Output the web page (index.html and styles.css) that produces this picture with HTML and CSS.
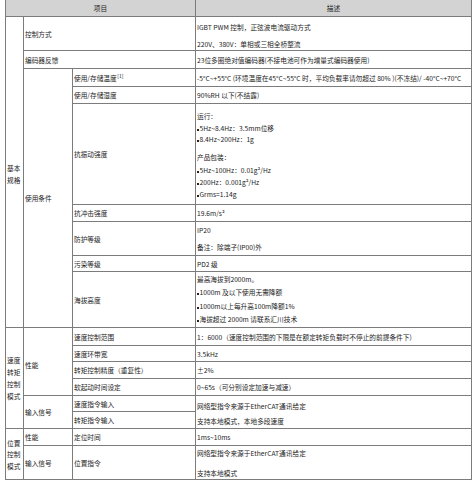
FILE: index.html
```html
<!DOCTYPE html>
<html lang="zh-CN">
<head>
<meta charset="utf-8">
<title>规格</title>
<link rel="stylesheet" href="styles.css">
</head>
<body>
<div class="spec">
  <div class="cell head c3">项目</div>
  <div class="cell head">描述</div>

  <div class="cell cat r9 cat-basic">基本<br>规格</div>
  <div class="cell c2">控制方式</div>
  <div class="cell lh17 shift">
    <div>IGBT PWM 控制，正弦波电流驱动方式</div>
    <div>220V、380V：单相或三相全桥整流</div>
  </div>

  <div class="cell c2">编码器反馈</div>
  <div class="cell">23位多圈绝对值编码器(不接电池可作为增量式编码器使用)</div>

  <div class="cell r7">使用条件</div>
  <div class="cell"><span>使用/存储温度<sup class="note">[1]</sup></span></div>
  <div class="cell">-5°C~+55°C (环境温度在45°C~55°C 时，平均负载率请勿超过 80% )(不冻结)/ -40°C~+70°C</div>

  <div class="cell">使用/存储湿度</div>
  <div class="cell">90%RH 以下(不结露)</div>

  <div class="cell">抗振动强度</div>
  <div class="cell vib">
    <div class="para">运行：</div>
    <div class="bul">5Hz~8.4Hz：3.5mm位移</div>
    <div class="bul">8.4Hz~200Hz：1g</div>
    <div class="para gap">产品包装：</div>
    <div class="bul tall">5Hz~100Hz：0.01g²/Hz</div>
    <div class="bul tall">200Hz：0.001g²/Hz</div>
    <div class="bul tall">Grms=1.14g</div>
  </div>

  <div class="cell">抗冲击强度</div>
  <div class="cell">19.6m/s²</div>

  <div class="cell">防护等级</div>
  <div class="cell lh16">
    <div>IP20</div>
    <div>备注：除端子(IP00)外</div>
  </div>

  <div class="cell">污染等级</div>
  <div class="cell">PD2 级</div>

  <div class="cell">海拔高度</div>
  <div class="cell alt">
    <div>最高海拔到2000m。</div>
    <div class="bul">1000m 及以下使用无需降额</div>
    <div class="bul">1000m以上每升高100m降额1%</div>
    <div class="bul">海拔超过 2000m 请联系汇川技术</div>
  </div>

  <div class="cell cat r6">速度<br>转矩<br>控制<br>模式</div>
  <div class="cell r4 low">性能</div>
  <div class="cell">速度控制范围</div>
  <div class="cell">1：6000（速度控制范围的下限是在额定转矩负载时不停止的前提条件下)</div>

  <div class="cell">速度环带宽</div>
  <div class="cell">3.5kHz</div>

  <div class="cell">转矩控制精度（重复性）</div>
  <div class="cell">±2%</div>

  <div class="cell">软起动时间设定</div>
  <div class="cell">0~65s（可分别设定加速与减速）</div>

  <div class="cell r2">输入信号</div>
  <div class="cell">速度指令输入</div>
  <div class="cell r2 lh15 shift">
    <div>网络型指令来源于EtherCAT通讯给定</div>
    <div>支持本地模式，本地多段速度</div>
  </div>
  <div class="cell">转矩指令输入</div>

  <div class="cell cat r2 cat-pos">位置<br>控制<br>模式</div>
  <div class="cell">性能</div>
  <div class="cell">定位时间</div>
  <div class="cell">1ms~10ms</div>

  <div class="cell">输入信号</div>
  <div class="cell">位置指令</div>
  <div class="cell lh20">
    <div>网络型指令来源于EtherCAT通讯给定</div>
    <div>支持本地模式</div>
  </div>
</div>
</body>
</html>
```

FILE: styles.css
```css
html, body {
  margin: 0;
  padding: 0;
  background: #fff;
}

body {
  font-family: "Noto Sans CJK SC", "Noto Sans", sans-serif;
  font-size: 6.7px;
  color: #1c1c1c;
}

.spec {
  display: grid;
  grid-template-columns: 17px 48px 122px 275px;
  grid-template-rows: 16px 33px 17px 17px 16px 100px 16px 33px 15px 55px 17px 15px 16px 16px 15px 16px 16px 33px;
  gap: 1px;
  padding: 0 1px 1px;
  background: #7c7c7c;
  width: max-content;
  margin-left: 5px;
}

.cell {
  background: #fff;
  display: flex;
  flex-direction: column;
  justify-content: center;
  padding: 0 1px;
  line-height: 10px;
  white-space: nowrap;
}

.head {
  background: #d3d3d3;
  align-items: center;
}

.c2 { grid-column: span 2; }
.c3 { grid-column: span 3; }
.r2 { grid-row: span 2; }
.r4 { grid-row: span 4; }
.r6 { grid-row: span 6; }
.r7 { grid-row: span 7; }
.r9 { grid-row: span 9; }

.cat {
  line-height: 12px;
  padding-left: 1px;
  padding-right: 0;
}

.cat-basic { padding-top: 4px; }
.cat-pos { line-height: 11.5px; padding-top: 2px; }
.low { padding-top: 6px; }

.lh15 { line-height: 15px; }
.lh16 { line-height: 16.5px; }
.lh17 { line-height: 17px; }
.lh20 { line-height: 20px; }
.shift { padding-top: 4px; }

.alt { line-height: 13.5px; }

.vib .para { line-height: 14px; }
.vib .gap { margin-top: 5px; }
.vib .bul { line-height: 11px; }
.vib .tall { line-height: 12px; }

.bul::before {
  content: "";
  display: inline-block;
  width: 2px;
  height: 2px;
  background: #222;
  margin-right: 0.5px;
  vertical-align: 0;
}

.note {
  font-size: 5px;
  line-height: 5px;
  vertical-align: 3px;
  margin-left: 0.5px;
}
```
